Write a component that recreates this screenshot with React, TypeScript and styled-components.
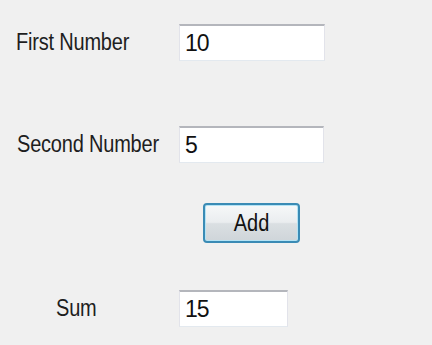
import React from 'react'
import styled, { createGlobalStyle } from 'styled-components'

const GlobalStyle = createGlobalStyle`
  html, body {
    margin: 0;
    padding: 0;
    background: #f0f0f0;
  }
  body {
    font-family: "Liberation Sans", Arial, sans-serif;
  }
`

const Form = styled.div`
  width: 432px;
  height: 345px;
  box-sizing: border-box;
  padding-top: 24px;
  background: #f0f0f0;
  overflow: hidden;
`

const FieldRow = styled.div<{ $gap: number }>`
  display: grid;
  grid-template-columns: 179px auto;
  align-items: center;
  margin-top: ${p => p.$gap}px;
`

// the form was captured with tall, narrow text, so the glyphs get stretched a bit
const Label = styled.span<{ $indent: number }>`
  display: inline-block;
  justify-self: start;
  margin-left: ${p => p.$indent}px;
  font-size: 20px;
  color: #1e1e1e;
  white-space: nowrap;
  letter-spacing: -0.2px;
  transform: scaleY(1.15);
  transform-origin: left center;
`

const TextBox = styled.input<{ $width: number }>`
  box-sizing: border-box;
  width: ${p => p.$width}px;
  height: 37px;
  margin: 0;
  padding: 0 0 0 5px;
  background: #ffffff;
  border: 1px solid #e2e3ea;
  border-top: 2px solid #b4b6bc;
  border-bottom-color: #e3e9ef;
  border-radius: 0;
  font-family: "Liberation Sans", Arial, sans-serif;
  font-size: 23px;
  letter-spacing: -1px;
  color: #111;
  outline: none;
`

const ButtonRow = styled.div`
  display: flex;
  margin-top: 40px;
  padding-left: 203px;
`

const Button = styled.button`
  box-sizing: border-box;
  width: 97px;
  height: 40px;
  margin: 0;
  padding: 0;
  border: 2px solid #3a8bb5;
  border-radius: 4px;
  background: linear-gradient(to bottom, #f6f8f9 0%, #eaedef 48%, #dadfe2 52%, #cfd5d9 100%);
  box-shadow: inset 0 0 0 1px #b4e3f5;
  font-family: "Liberation Sans", Arial, sans-serif;
  font-size: 20px;
  color: #111;
  cursor: default;

  span {
    display: inline-block;
    transform: scaleY(1.15);
  }
`

const App: React.FC = () => {
  return (
    <>
      <GlobalStyle />
      <Form>
        <FieldRow $gap={0}>
          <Label $indent={16}>First Number</Label>
          <TextBox $width={146} defaultValue="10" />
        </FieldRow>
        <FieldRow $gap={65}>
          <Label $indent={17}>Second Number</Label>
          <TextBox $width={145} defaultValue="5" />
        </FieldRow>
        <ButtonRow>
          <Button>
            <span>Add</span>
          </Button>
        </ButtonRow>
        <FieldRow $gap={47}>
          <Label $indent={56}>Sum</Label>
          <TextBox $width={109} defaultValue="15" />
        </FieldRow>
      </Form>
    </>
  )
}

export default App
